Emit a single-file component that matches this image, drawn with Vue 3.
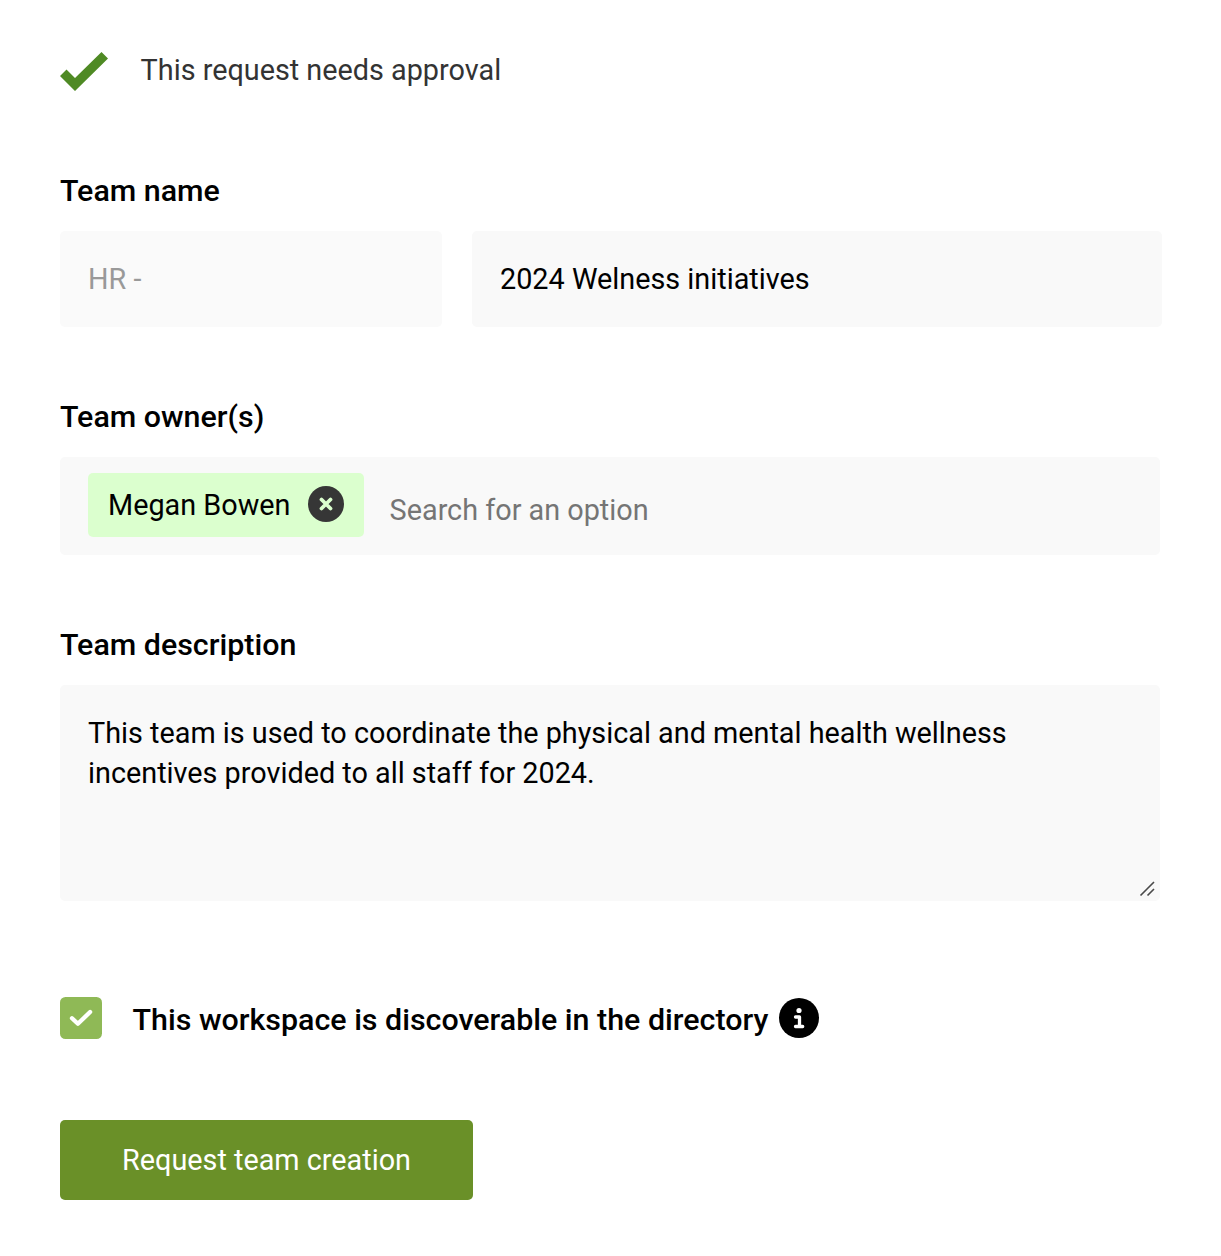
<script setup>
import { ref } from 'vue'
const name = ref('2024 Welness initiatives')
const description = ref('This team is used to coordinate the physical and mental health wellness incentives provided to all staff for 2024.')
</script>

<template>
  <main class="form">
    <div class="notice">
      <svg class="tick" width="48" height="42" viewBox="0 0 48 42"><path d="M0 26 6.500 19.500 15 28 41.500 2 48 8.500 15 41Z" fill="#4f8a24" /></svg>
      <span>This request needs approval</span>
    </div>

    <section class="name">
      <h2>Team name</h2>
      <div class="row">
        <div class="field prefix"><span>HR -</span></div>
        <div class="field title"><span>{{ name }}</span></div>
      </div>
    </section>

    <section class="owners">
      <h2>Team owner(s)</h2>
      <div class="field owner-field">
        <div class="chip">
          <span>Megan Bowen</span>
          <svg width="36" height="36" viewBox="0 0 36 36"><circle cx="18" cy="18" r="18" fill="#363636" /><path d="M13.500 13.500 22.500 22.500M22.500 13.500 13.500 22.500" stroke="#dbffce" stroke-width="3.800" stroke-linecap="round" /></svg>
        </div>
        <span class="search">Search for an option</span>
      </div>
    </section>

    <section class="description">
      <h2>Team description</h2>
      <div class="field area">
        <p>{{ description }}</p>
        <svg class="grip" width="16" height="16" viewBox="0 0 16 16"><path d="M1.500 14.500 15 1M8.500 14.500 15 8" stroke="#4a4a4a" stroke-width="1.600" /></svg>
      </div>
    </section>

    <div class="discover">
      <svg width="42" height="42" viewBox="0 0 42 42"><rect width="42" height="42" rx="5.500" fill="#8fb956" /><path d="M12 21.200 17.900 26.800 30.100 15" fill="none" stroke="#fff" stroke-width="4.300" stroke-linecap="round" stroke-linejoin="round" /></svg>
      <span>This workspace is discoverable in the directory</span>
      <svg class="info" width="40" height="40" viewBox="0 0 40 40"><circle cx="20" cy="20" r="20" /><circle cx="20" cy="12.500" r="2.600" fill="#fff" /><path d="M16.500 19H20.500V28.500M16.500 28.500H23.700" fill="none" stroke="#fff" stroke-width="3.300" stroke-linecap="round" stroke-linejoin="round" /></svg>
    </div>

    <button type="button">Request team creation</button>
  </main>
</template>

<style>
body { margin: 0; background: #fff; }
</style>

<style scoped>
.form { box-sizing: border-box; width: 1221px; height: 1256px; padding: 50px 59px 0 60px; overflow: hidden; font: 400 28.8px/40px Roboto, sans-serif; color: #000; }
.notice { display: flex; align-items: flex-start; height: 40px; color: #333; }
.notice span { margin-left: 32.6px; }
.name { margin-top: 81px; }
h2 { margin: 0 0 20px; font: 500 30.4px/40px Roboto, sans-serif; }
.row { display: flex; gap: 30px; }
.field { box-sizing: border-box; display: flex; background: #f9f9f9; border-radius: 5px; padding: 0 28px; align-items: center; }
.prefix { width: 382px; height: 96px; background: #fafafa; color: #999; }
.title { width: 690px; height: 96px; }
.owners { margin-top: 70px; }
.owner-field { width: 1100px; height: 98px; }
.chip { box-sizing: border-box; display: flex; align-items: center; justify-content: space-between; width: 276px; height: 64px; padding: 0 20px; margin-bottom: 2px; border-radius: 5px; background: #dbffce; }
.chip svg { margin-bottom: 2px; }
.search { margin: 8px 0 0 25.600px; color: #757575; }
.description { margin-top: 70px; }
.area { position: relative; width: 1100px; height: 216px; align-items: flex-start; padding-top: 28px; }
.area p { margin: 0; width: 960px; }
.grip { position: absolute; right: 5px; bottom: 4px; }
.discover { display: flex; align-items: center; height: 42px; margin-top: 96px; font-size: 30.4px; font-weight: 500; }
.discover span { margin: 4px 0 0 30.600px; }
.info { margin-left: 10.400px; }
button { display: block; width: 413px; height: 80px; margin-top: 81px; padding: 0; border: 0; border-radius: 5px; background: #6a9028; color: #fff; font: inherit; }
</style>
